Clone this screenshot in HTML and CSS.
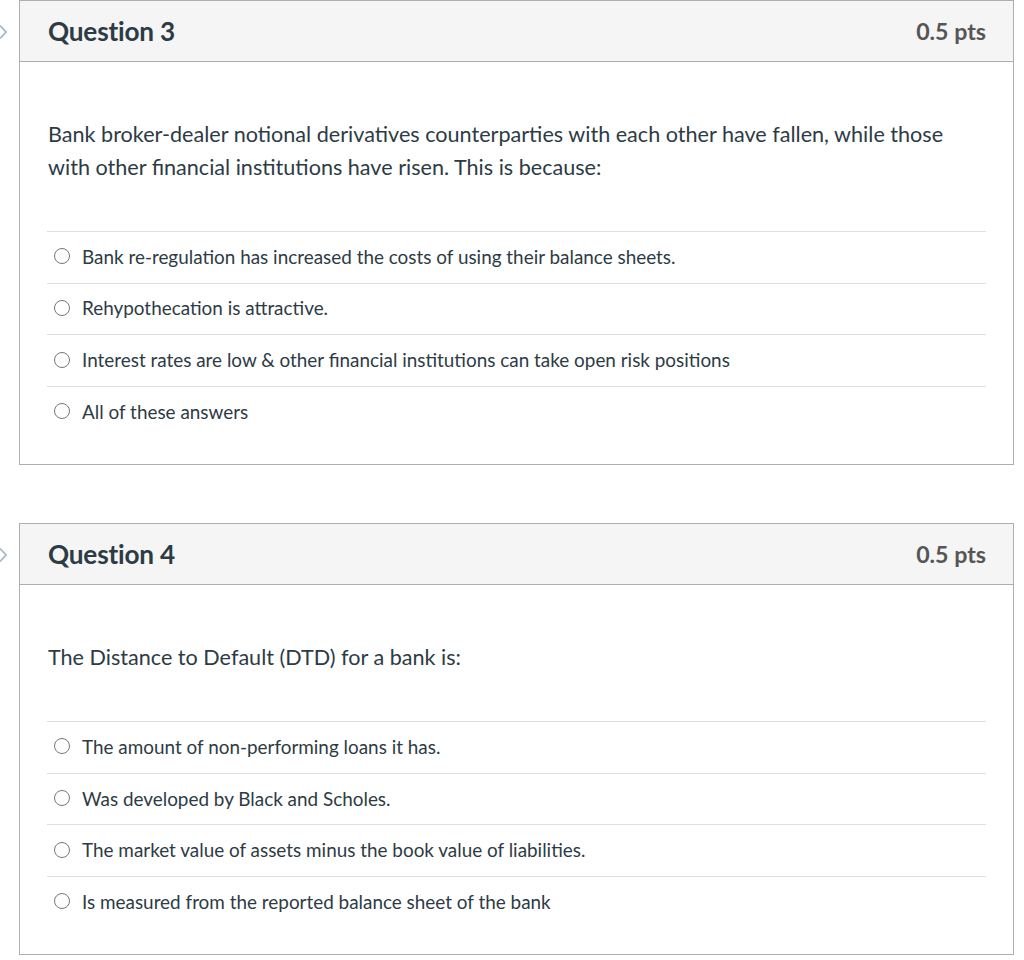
FILE: index.html
```html
<!DOCTYPE html>
<html lang="en">
<head>
<meta charset="utf-8">
<title>Quiz</title>
<link rel="stylesheet" href="styles.css">
</head>
<body>
<div class="quiz">
  <div class="qrow">
    <div class="marker">
      <svg width="10" height="16" viewBox="0 0 10 16"><path d="M1 1.5 L7 8 L1 14.5" fill="none" stroke="#a3b7c9" stroke-width="1.8"/></svg>
    </div>
    <div class="card">
      <div class="card-head">
        <h2 class="q-title">Question 3</h2>
        <span class="q-pts">0.5 pts</span>
      </div>
      <div class="card-body">
        <p class="q-text">Bank broker-dealer notional derivatives counterparties with each other have fallen, while those with other financial institutions have risen. This is because:</p>
        <ul class="answers">
          <li class="answer"><span class="radio"></span>Bank re-regulation has increased the costs of using their balance sheets.</li>
          <li class="answer"><span class="radio"></span>Rehypothecation is attractive.</li>
          <li class="answer"><span class="radio"></span>Interest rates are low &amp; other financial institutions can take open risk positions</li>
          <li class="answer"><span class="radio"></span>All of these answers</li>
        </ul>
      </div>
    </div>
  </div>

  <div class="qrow">
    <div class="marker">
      <svg width="10" height="16" viewBox="0 0 10 16"><path d="M1 1.5 L7 8 L1 14.5" fill="none" stroke="#a3b7c9" stroke-width="1.8"/></svg>
    </div>
    <div class="card">
      <div class="card-head">
        <h2 class="q-title">Question 4</h2>
        <span class="q-pts">0.5 pts</span>
      </div>
      <div class="card-body">
        <p class="q-text">The Distance to Default (DTD) for a bank is:</p>
        <ul class="answers">
          <li class="answer"><span class="radio"></span>The amount of non-performing loans it has.</li>
          <li class="answer"><span class="radio"></span>Was developed by Black and Scholes.</li>
          <li class="answer"><span class="radio"></span>The market value of assets minus the book value of liabilities.</li>
          <li class="answer"><span class="radio"></span>Is measured from the reported balance sheet of the bank</li>
        </ul>
      </div>
    </div>
  </div>
</div>
</body>
</html>
```

FILE: styles.css
```css
* { box-sizing: border-box; }

html, body {
  margin: 0;
  padding: 0;
  background: #ffffff;
}

body {
  font-family: Lato, "Open Sans", "Liberation Sans", sans-serif;
  color: #2d3b45;
}

.quiz {
  display: flex;
  flex-direction: column;
  gap: 58px;
  padding-right: 10px;
}

.qrow {
  display: flex;
  align-items: flex-start;
}

.marker {
  width: 19px;
  flex: none;
  padding-top: 24px;
  overflow: hidden;
}

.marker svg {
  display: block;
  margin-left: -1px;
}

.card {
  flex: 1;
  border: 1px solid #aeaeae;
  background: #fff;
}

.card-head {
  height: 61px;
  background: #f5f5f5;
  border-bottom: 1px solid #aeaeae;
  display: flex;
  align-items: center;
  justify-content: space-between;
  padding: 0 27px 0 28px;
}

.q-title {
  margin: 0;
  font-size: 26.2px;
  font-weight: 700;
  color: #2d3b45;
  letter-spacing: -0.2px;
}

.q-pts {
  font-size: 23.2px;
  font-weight: 700;
  color: #565656;
}

.card-body {
  padding: 56px 27px 26.5px 27px;
}

.q-text {
  margin: 0 0 47px 1px;
  font-size: 21.6px;
  line-height: 33px;
}

.answers {
  list-style: none;
  margin: 0;
  padding: 0;
}

.answer {
  display: flex;
  align-items: center;
  height: 51.67px;
  border-top: 1px solid #dedede;
  font-size: 18.9px;
  padding-left: 7px;
  padding-bottom: 2px;
}

.radio {
  width: 16px;
  height: 16px;
  border: 1px solid #777;
  border-radius: 50%;
  margin-right: 12px;
  flex: none;
}
```
